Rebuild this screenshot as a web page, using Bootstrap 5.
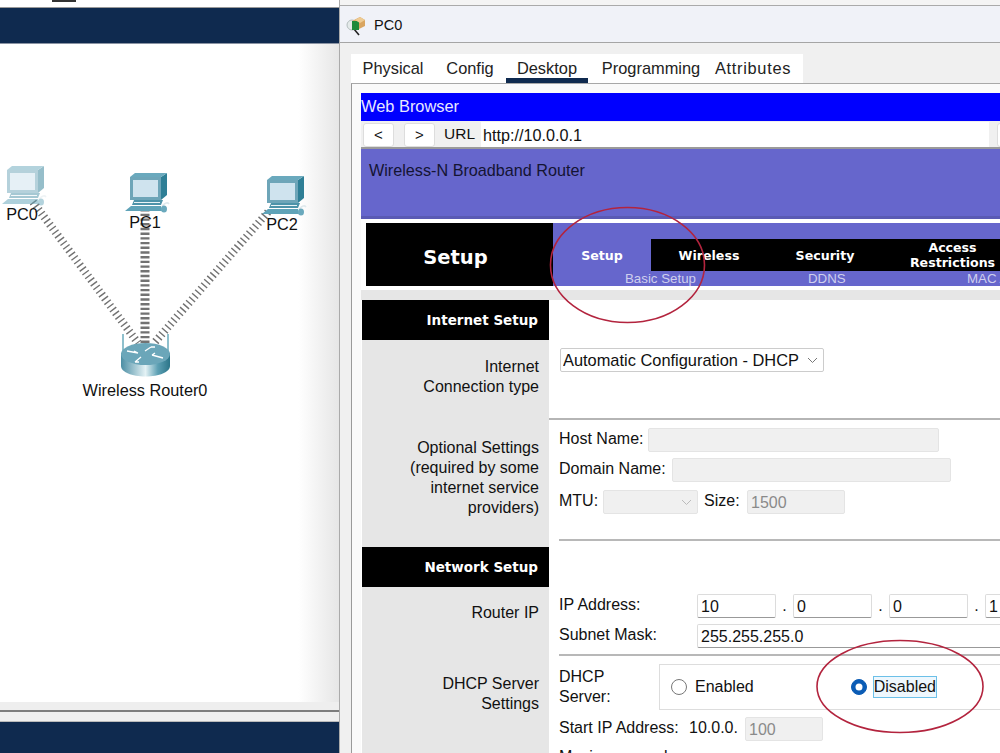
<!DOCTYPE html>
<html lang="en">
<head>
  <meta charset="UTF-8" />
  <title>PC0 - Web Browser</title>
  <link href="https://cdn.jsdelivr.net/npm/bootstrap@5.3.0/dist/css/bootstrap.min.css" rel="stylesheet"/>
  <style>
    html, body { height: 753px; overflow: hidden; }
    body { font-family: "Liberation Sans", Arial, sans-serif; font-size: 16px; color: #111; background: #fff; }

    /* left workspace */
    .workspace { width: 339px; height: 753px; }
    .ws-top { height: 8px; border-bottom: 1px solid #999; position: relative; }
    .ws-top-mark { width: 24px; height: 2px; background: #333; position: absolute; left: 52px; top: 0; }
    .ws-navy { height: 36px; background: #0f2a4f; border-bottom: 1px solid #8a93a3; }
    .ws-canvas { height: 658px; background: linear-gradient(90deg, #fff 0, #fff 88%, #e6e6e6 100%); position: relative; }
    .ws-canvas svg { position: absolute; left: 0; top: 0; }
    .ws-strip { height: 10px; background: #eee; border-bottom: 2px solid #7d7d7d; }
    .ws-strip2 { height: 10px; background: #efefef; border-bottom: 1px solid #bbb; }
    .ws-navy2 { height: 31px; background: #0f2a4f; }

    /* PC0 window */
    .pcwin { width: 661px; height: 753px; overflow: hidden; background: #f0f0f0; border-left: 1px solid #aaa; flex: none; }
    .win-gap { height: 6px; background: #f4f4f4; border-bottom: 1px solid #aaa; }
    .win-title { height: 37px; background: #f0f2f8; border-bottom: 1px solid #a5a5a5; padding: 3px 0 0 6px; font-size: 14.5px; gap: 8px; }
    .win-tabs { margin: 11px 0 0 11px; background: #fff; width: 452px; height: 29px; font-size: 16.4px; padding-left: 1px; }
    .win-tab { padding: 2px 0 0; color: #222; text-decoration: none; height: 29px; text-align: center; }
    .win-tab.is-on { border-bottom: 5px solid #0f2a4f; }
    .win-tab-wide { letter-spacing: .7px; }
    .win-pane { width: 900px; height: 670px; margin-left: 11px; background: #fafafa; border-top: 1px solid #a8a8a8; border-left: 1px solid #9a9a9a; padding: 9px 0 0 9px; }
    .web-head { height: 28px; background: #0000ff; color: #e8e8ff; line-height: 26px; font-size: 16.4px; }
    .url-row { height: 28px; background: #f0f0f0; border-bottom: 2px solid #9a9a9a; padding: 2px 0 0 2px; }
    .url-btn { width: 31px; height: 24px; padding: 0; background: #fff; border: 1px solid #ddd; border-radius: 3px; font-size: 15px; line-height: 20px; color: #111; }
    .url-gap { margin-right: 10px; }
    .url-lbl { width: 46px; padding-left: 9px; font-size: 15.5px; line-height: 22px; }
    .url-box { width: 508px; height: 25px; margin-top: -1px; background: #fff; padding-left: 2px; font-size: 16.2px; line-height: 26px; }

    /* router page */
    .rt-banner { height: 70px; background: #6666cc; border-bottom: 3px solid #5a5ab4; padding: 9px 0 0 8px; color: #141433; font-size: 16.2px; }
    .rt-page { background: #fff; width: 800px; }
    .rt-nav { margin: 4px 0 0 5px; height: 63px; }
    .rt-title { width: 187px; padding: 6px 8px 0 0; background: #000; color: #fff; font: 700 19.5px "DejaVu Sans", sans-serif; }
    .rt-menu { background: #6666cc; width: 600px; }
    .rt-tabs { margin-top: 16px; height: 32px; font: 700 12.6px/15px "DejaVu Sans", sans-serif; color: #fff; background: #000; }
    .rt-tab { text-align: center; flex: none; }
    .rt-tab.is-on { background: #6666cc; }
    .rt-sub { height: 15px; font-size: 13.3px; line-height: 15px; color: #cfcfee; position: relative; }
    .rt-sub span { position: absolute; top: 0; }
    .rt-band { height: 14px; padding-top: 4px; background: #fff; }
    .rt-band i { display: block; height: 10px; background: #e6e6e6; }

    .sec-head { display: flex; }
    .sec-black { width: 187px; height: 40px; background: #000; color: #fff; text-align: right; padding-right: 11px; font: 700 13.5px/40px "DejaVu Sans", sans-serif; margin-left: 1px; }
    .sec-row { display: flex; font-size: 16px; line-height: 20px; }
    .sec-side { width: 187px; background: #e6e6e6; text-align: right; padding-right: 10px; margin-left: 1px; flex: none; }
    .sec-main { flex: 1; padding-left: 10px; position: relative; }
    .rule { height: 2px; background: #b8b8b8; }
    .fld-line { height: 24px; line-height: 20px; }
    .fld-line > span { padding-bottom: 2px; }
    .fld-line > .fld-val { padding-bottom: 0; }
    .fld { height: 24px; padding: 1px 3px 0; font-size: 16px; line-height: 22px; border: 1px solid #dcdcdc; border-bottom-color: #999; border-radius: 2px; color: #111; box-shadow: none; flex: none; }
    .fld:disabled { background: #f0f0f0; border: 1px solid #e4e4e4; color: #8a8a8a; opacity: 1; }
    .fld-sel { height: 24px; padding: 0 24px 0 2px; font-size: 16.4px; line-height: 22px; border: 1px solid #ccc; border-radius: 2px; color: #111; background-image: url("data:image/svg+xml,%3csvg xmlns='http://www.w3.org/2000/svg' viewBox='0 0 11 7'%3e%3cpath fill='none' stroke='%23777' d='M1 1l4.500 4.500L10 1'/%3e%3c/svg%3e"); background-position: right 5px center; background-size: 11px 7px; box-shadow: none; }
    .fld-sel:disabled { background-color: #f0f0f0; border-color: #e4e4e4; background-image: url("data:image/svg+xml,%3csvg xmlns='http://www.w3.org/2000/svg' viewBox='0 0 11 7'%3e%3cpath fill='none' stroke='%23bbb' d='M1 1l4.500 4.500L10 1'/%3e%3c/svg%3e"); }
    .dhcp-box { width: 500px; height: 46px; margin-left: 29px; border: 1px solid #ddd; background: #fff; }
    .dhcp-radio { margin: 0; width: 16px; height: 16px; flex: none; border: 1px solid #777; }
    .dhcp-radio:checked { background-color: #0b5cb5; border-color: #0b5cb5; }
    .dhcp-focus { border: 1px solid #6cc0e8; background: #eef7fd; padding: 0; height: 22px; line-height: 20px; }
    .mark-ring { position: absolute; left: 0; top: 0; pointer-events: none; }
  </style>
</head>
<body>
  <div class="d-flex position-relative">

    <div class="workspace flex-shrink-0">
      <div class="ws-top"><div class="ws-top-mark"></div></div>
      <div class="ws-navy"></div>
      <div class="ws-canvas">
        <svg width="339" height="658" viewBox="0 44 339 658">
          <defs>
            <symbol id="pc-ico" viewBox="0 0 45 41" overflow="visible">
              <polygon points="36,4 42,0 42,22 36,27" fill="#2f7f96"/>
              <polygon points="5,4 10,0 42,0 36,4" fill="#6aa9bd"/>
              <rect x="5" y="4" width="31" height="23" fill="#6ea5b8"/>
              <rect x="8" y="7" width="25" height="17" fill="#cfe3ee"/>
              <polygon points="9,27 38,27 36,32 7,32" fill="#4d93a9"/>
              <rect x="9" y="29" width="26" height="1" fill="#eaf3f6"/>
              <polygon points="6,33 36,33 37,38 0,38" fill="#5fa3b8"/>
              <path d="M37 33q5-5 7-2" fill="none" stroke="#dfe9ed" stroke-width="1.5"/>
              <ellipse cx="39" cy="36" rx="3" ry="3.5" fill="#6aa9bd"/>
            </symbol>
            <linearGradient id="rt-body" x1="0" x2="1" y1="0" y2="0">
              <stop offset="0" stop-color="#4c8ea4"/>
              <stop offset=".5" stop-color="#e4f2f5"/>
              <stop offset=".75" stop-color="#5da0b4"/>
              <stop offset="1" stop-color="#2c7589"/>
            </linearGradient>
          </defs>

          <g stroke="#727272" fill="none">
            <line x1="33" y1="202" x2="138" y2="343" stroke-width="8" stroke-dasharray="1.4 3.2"/>
            <line x1="145" y1="209" x2="145" y2="343" stroke-width="9" stroke-dasharray="2.4 2.3"/>
            <line x1="268" y1="212" x2="155" y2="342" stroke-width="8" stroke-dasharray="1.4 3.2"/>
          </g>

          <use href="#pc-ico" x="2" y="166" width="45" height="41" opacity=".5"/>
          <use href="#pc-ico" x="125" y="173" width="45" height="41"/>
          <use href="#pc-ico" x="262" y="176" width="45" height="41"/>

          <g font-family="Liberation Sans, Arial, sans-serif" font-size="16.3" fill="#111" text-anchor="middle">
            <text x="22" y="220">PC0</text>
            <text x="145" y="228">PC1</text>
            <text x="282" y="230">PC2</text>
            <text x="145" y="396">Wireless Router0</text>
          </g>

          <g>
            <path d="M123 352V334M168 352V334" stroke="#8fc0cd" stroke-width="2"/>
            <path d="M121 353V366C121 372 132 376.500 145.500 376.500S170 372 170 366V353Z" fill="url(#rt-body)"/>
            <ellipse cx="145.500" cy="354" rx="24.500" ry="11" fill="#6ba6b9"/>
            <g stroke="#fff" stroke-width="1.300" fill="none">
              <path d="M127 351l11 2M134 351l4 2"/>
              <path d="M151 347l-6 4M151 347h4"/>
              <path d="M152 355l11 3M152 355l3-2"/>
              <path d="M141 357l-6 5M135 362h4"/>
            </g>
          </g>
        </svg>
      </div>
      <div class="ws-strip"></div>
      <div class="ws-strip2"></div>
      <div class="ws-navy2"></div>
    </div>

    <div class="pcwin">
      <div class="win-gap"></div>
      <div class="win-title d-flex align-items-center">
        <svg width="20" height="20" viewBox="0 0 20 20">
          <circle cx="6" cy="9" r="5" fill="#e4eaea" stroke="#b4bebe"/>
          <line x1="8" y1="13" x2="13" y2="19" stroke="#222" stroke-width="1.600"/>
          <polygon points="6,5 14,1 19,4 19,10 11,14 6,11" fill="#d9a560"/>
          <rect x="6" y="5" width="7" height="9" fill="#1d8a3a"/>
          <polygon points="9,4 14,1 19,4 14,7" fill="#eecb93"/>
        </svg>
        <span>PC0</span>
      </div>

      <nav class="win-tabs d-flex">
        <a class="win-tab" href="#" style="width:82px">Physical</a>
        <a class="win-tab" href="#" style="width:72px">Config</a>
        <a class="win-tab is-on" href="#" style="width:82px">Desktop</a>
        <a class="win-tab" href="#" style="width:126px">Programming</a>
        <a class="win-tab win-tab-wide" href="#" style="width:78px">Attributes</a>
      </nav>

      <div class="win-pane">
        <div class="web-head">Web Browser</div>
        <div class="url-row d-flex align-items-start">
          <button type="button" class="btn url-btn url-gap">&lt;</button>
          <button type="button" class="btn url-btn">&gt;</button>
          <span class="url-lbl">URL</span>
          <div class="url-box">http://10.0.0.1</div>
          <button type="button" class="btn url-btn ms-2"></button>
        </div>

        <div class="rt-page">
          <div class="rt-banner">Wireless-N Broadband Router</div>

          <div class="rt-nav d-flex">
            <div class="rt-title d-flex align-items-center justify-content-center">Setup</div>
            <div class="rt-menu">
              <div class="rt-tabs d-flex align-items-center">
                <div class="rt-tab is-on d-flex align-items-center justify-content-center" style="width:98px;height:32px">Setup</div>
                <div class="rt-tab" style="width:116px">Wireless</div>
                <div class="rt-tab" style="width:116px">Security</div>
                <div class="rt-tab" style="width:139px">Access<br>Restrictions</div>
              </div>
              <div class="rt-sub">
                <span style="left:72px">Basic Setup</span>
                <span style="left:255px">DDNS</span>
                <span style="left:414px">MAC Address Clone</span>
              </div>
            </div>
          </div>

          <div class="rt-band"><i></i></div>

          <div class="sec-head"><div class="sec-black">Internet Setup</div></div>
          <div class="sec-row" style="height:79px">
            <div class="sec-side" style="padding-top:17px">Internet<br>Connection type</div>
            <div class="sec-main" style="padding-top:8px">
              <select class="form-select fld-sel" style="width:264px;margin-left:1px">
                <option>Automatic Configuration - DHCP</option>
              </select>
            </div>
          </div>
          <div class="sec-row" style="height:128px">
            <div class="sec-side" style="padding-top:19px">Optional Settings<br>(required by some<br>internet service<br>providers)</div>
            <div class="sec-main" style="padding-top:8px;border-top:2px solid #b5b5b5;margin-top:-1px">
              <div class="fld-line d-flex align-items-center">
                <span style="width:89px">Host Name:</span>
                <input class="form-control fld" style="width:291px" disabled>
              </div>
              <div class="fld-line d-flex align-items-center" style="margin-top:6px">
                <span style="width:113px">Domain Name:</span>
                <input class="form-control fld" style="width:279px" disabled>
              </div>
              <div class="fld-line d-flex align-items-center mt-2">
                <span style="width:44px">MTU:</span>
                <select class="form-select fld-sel" style="width:95px" disabled></select>
                <span style="margin-left:6px;width:43px">Size:</span>
                <input class="form-control fld" style="width:98px" value="1500" disabled>
              </div>
              <div class="rule" style="margin-top:25px"></div>
            </div>
          </div>

          <div class="sec-head"><div class="sec-black">Network Setup</div></div>
          <div class="sec-row" style="height:69px">
            <div class="sec-side" style="padding-top:16px">Router IP</div>
            <div class="sec-main" style="padding-top:7px">
              <div class="fld-line d-flex align-items-center">
                <span style="width:138px">IP Address:</span>
                <input class="form-control fld" style="width:79px" value="10">
                <span class="text-center fld-val" style="width:17px">.</span>
                <input class="form-control fld" style="width:79px" value="0">
                <span class="text-center fld-val" style="width:17px">.</span>
                <input class="form-control fld" style="width:79px" value="0">
                <span class="text-center fld-val" style="width:17px">.</span>
                <input class="form-control fld" style="width:79px" value="1">
              </div>
              <div class="fld-line d-flex align-items-center" style="margin-top:6px">
                <span style="width:138px">Subnet Mask:</span>
                <input class="form-control fld" style="width:400px" value="255.255.255.0">
              </div>
              <div class="rule" style="margin-top:6px"></div>
            </div>
          </div>
          <div class="sec-row" style="height:120px">
            <div class="sec-side" style="padding-top:18px">DHCP Server<br>Settings</div>
            <div class="sec-main" style="padding-top:8px">
              <div class="d-flex align-items-center">
                <div style="width:71px">DHCP<br>Server:</div>
                <div class="dhcp-box d-flex align-items-center">
                  <input class="form-check-input dhcp-radio" type="radio" name="dhcp" style="margin-left:11px">
                  <span class="ms-2">Enabled</span>
                  <input class="form-check-input dhcp-radio" type="radio" name="dhcp" style="margin-left:97px" checked>
                  <span class="dhcp-focus" style="margin-left:6px">Disabled</span>
                </div>
              </div>
              <div class="fld-line d-flex align-items-center" style="margin-top:7px">
                <span style="width:130px">Start IP Address:</span>
                <span style="width:56px">10.0.0.</span>
                <input class="form-control fld" style="width:78px" value="100" disabled>
              </div>
              <div style="margin-top:6px">Maximum number</div>
            </div>
          </div>
        </div>
      </div>
    </div>

    <svg class="mark-ring" width="1000" height="753" viewBox="0 0 1000 753">
      <ellipse cx="627.500" cy="265" rx="77" ry="57.500" fill="none" stroke="#b3243e" stroke-width="1.600"/>
      <ellipse cx="900" cy="686.500" rx="83" ry="46" fill="none" stroke="#b3243e" stroke-width="1.600"/>
    </svg>
  </div>
</body>
</html>
